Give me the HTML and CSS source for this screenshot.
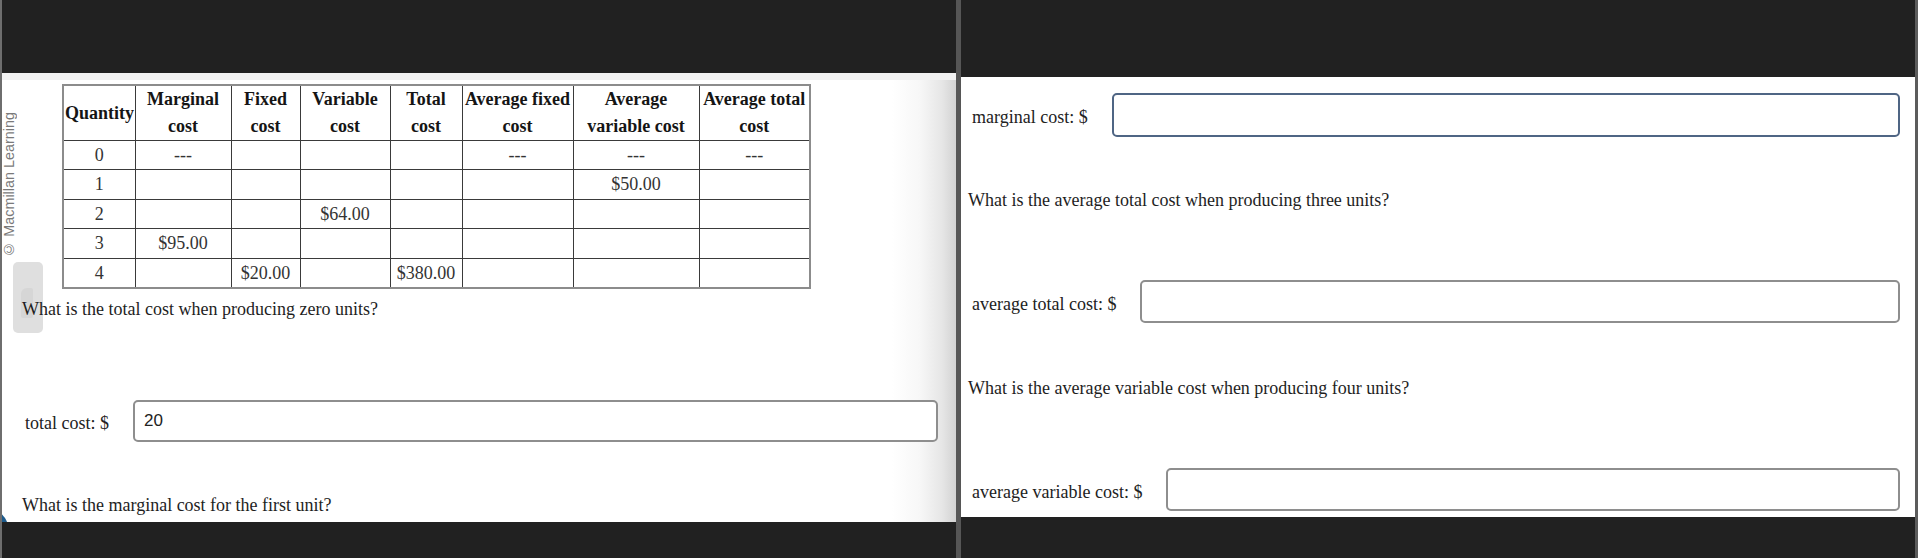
FILE: index.html
```html
<!DOCTYPE html>
<html lang="en">
<head>
<meta charset="utf-8">
<title>Cost table questions</title>
<link rel="stylesheet" href="styles.css">
</head>
<body>
<div class="screen">
  <section class="pane pane-left">
    <div class="bar bar-top-left"></div>
    <div class="sheet sheet-left">
      <div class="gutter"><span class="credit">© Macmillan Learning</span></div>
      <div class="main main-left">
        <table class="cost-table">
          <colgroup>
            <col class="c-qty"><col class="c-mc"><col class="c-fc"><col class="c-vc"><col class="c-tc"><col class="c-afc"><col class="c-avc"><col class="c-atc">
          </colgroup>
          <thead>
            <tr>
              <th>Quantity</th>
              <th>Marginal<br>cost</th>
              <th>Fixed<br>cost</th>
              <th>Variable<br>cost</th>
              <th>Total<br>cost</th>
              <th>Average fixed<br>cost</th>
              <th>Average<br>variable cost</th>
              <th>Average total<br>cost</th>
            </tr>
          </thead>
          <tbody>
            <tr><td>0</td><td>---</td><td></td><td></td><td></td><td>---</td><td>---</td><td>---</td></tr>
            <tr><td>1</td><td></td><td></td><td></td><td></td><td></td><td>$50.00</td><td></td></tr>
            <tr><td>2</td><td></td><td></td><td>$64.00</td><td></td><td></td><td></td><td></td></tr>
            <tr><td>3</td><td>$95.00</td><td></td><td></td><td></td><td></td><td></td><td></td></tr>
            <tr><td>4</td><td></td><td>$20.00</td><td></td><td>$380.00</td><td></td><td></td><td></td></tr>
          </tbody>
        </table>
        <p class="q q-after-table">What is the total cost when producing zero units?</p>
        <div class="answer answer-left">
          <label class="lbl" for="tc0">total cost: $</label>
          <input class="field" id="tc0" type="text" value="20">
        </div>
        <p class="q q-gap">What is the marginal cost for the first unit?</p>
      </div>
      <div class="tab-handle"><span class="tab-mark"></span></div>
      <div class="chat-dot"></div>
    </div>
    <div class="bar bar-fill"></div>
  </section>
  <div class="divider"></div>
  <section class="pane pane-right">
    <div class="bar bar-top-right"></div>
    <div class="sheet sheet-right">
      <div class="answer answer-first">
        <label class="lbl" for="mc1">marginal cost: $</label>
        <input class="field field-focus" id="mc1" type="text" value="">
      </div>
      <p class="q q-gap">What is the average total cost when producing three units?</p>
      <div class="answer answer-next">
        <label class="lbl" for="atc3">average total cost: $</label>
        <input class="field" id="atc3" type="text" value="">
      </div>
      <p class="q q-gap2">What is the average variable cost when producing four units?</p>
      <div class="answer answer-last">
        <label class="lbl" for="avc4">average variable cost: $</label>
        <input class="field" id="avc4" type="text" value="">
      </div>
    </div>
    <div class="bar bar-fill"></div>
  </section>
</div>
</body>
</html>
```

FILE: styles.css
```css
html, body {
  margin: 0;
  padding: 0;
  background: #212121;
}

.screen {
  display: flex;
  width: 1918px;
  height: 558px;
  overflow: hidden;
  background: #212121;
  font-family: "Liberation Serif", "Times New Roman", serif;
  color: #222;
}

.pane {
  display: flex;
  flex-direction: column;
  box-sizing: border-box;
  height: 558px;
}

.pane-left {
  width: 956px;
  border-left: 2px solid #6e6e6e;
}

.pane-right {
  width: 957px;
  border-right: 3px solid #5c5c5c;
}

.divider {
  width: 5px;
  height: 558px;
  background: #565656;
}

.bar {
  background: #212121;
}

.bar-top-left { height: 73px; }
.bar-top-right { height: 77px; }
.bar-fill { flex: 1; }

.sheet {
  position: relative;
  z-index: 0;
  overflow: hidden;
  box-sizing: border-box;
}

.sheet-left {
  display: flex;
  height: 449px;
  border-top: 7px solid #f2f2f2;
  background: linear-gradient(to right, #ffffff 0, #ffffff calc(100% - 64px), #f7f7f7 calc(100% - 36px), #e6e6e6 calc(100% - 14px), #d2d2d2 100%);
}

.sheet-right {
  height: 440px;
  background: #ffffff;
  padding: 0 15px 0 7px;
}

.gutter {
  width: 20px;
  flex: none;
  padding-top: 32px;
}

.credit {
  display: inline-block;
  writing-mode: vertical-rl;
  transform: rotate(180deg);
  font-family: "Liberation Sans", Arial, sans-serif;
  font-size: 14.4px;
  line-height: 14px;
  color: #7a7a7a;
  white-space: nowrap;
}

.main-left {
  flex: 1;
  padding-right: 18px;
}

.cost-table {
  margin: 4px 0 0 40px;
  border-collapse: collapse;
  table-layout: fixed;
  width: 747px;
  border: 2px solid #8c8c8c;
  font-family: "Liberation Serif", "Times New Roman", serif;
  font-size: 18px;
}

.c-qty { width: 72px; }
.c-mc { width: 96px; }
.c-fc { width: 69px; }
.c-vc { width: 90px; }
.c-tc { width: 72px; }
.c-afc { width: 111px; }
.c-avc { width: 126px; }
.c-atc { width: 111px; }

.cost-table th,
.cost-table td {
  border: 1px solid #3a3a3a;
  padding: 0 1px;
  text-align: center;
  vertical-align: middle;
  white-space: nowrap;
  font-family: "Liberation Serif", "Times New Roman", serif;
}

.cost-table th {
  font-weight: bold;
  line-height: 27px;
  color: #151515;
}

.cost-table td {
  line-height: 28.4px;
  color: #333;
}

.q {
  margin: 0;
  font-size: 18px;
  line-height: 27px;
  color: #1e1e1e;
}

.q-after-table { margin-top: 7px; }
.main-left .q-gap { margin-top: 50px; }
.sheet-right .q-gap { margin-top: 50px; }
.q-gap2 { margin-top: 52px; }

.answer {
  display: flex;
  align-items: center;
}

.answer-left { margin-top: 77px; }
.answer-first { padding-top: 16px; }
.answer-next { margin-top: 66px; }
.answer-last { margin-top: 66px; }

.lbl {
  flex: none;
  padding: 5px 24px 0 3px;
  font-family: "Liberation Serif", "Times New Roman", serif;
  font-size: 18px;
  line-height: 27px;
  color: #222;
}

.sheet-right .lbl { padding-left: 4px; }

.field {
  flex: 1;
  min-width: 0;
  box-sizing: border-box;
  height: 43px;
  margin: 0;
  padding: 0 9px;
  border: 2px solid #8e8e8e;
  border-radius: 5px;
  background: #fff;
  font-family: "Liberation Sans", Arial, sans-serif;
  font-size: 17px;
  color: #222;
  outline: none;
}

.answer-left .field { height: 42px; }

.field-focus {
  height: 44px;
  border-color: #4f6584;
}

.tab-handle {
  position: absolute;
  left: 11px;
  top: 182px;
  z-index: -1;
  width: 30px;
  height: 71px;
  border-radius: 5px;
  background: #dfdfdf;
}

.tab-mark {
  display: block;
  margin: 26px 0 0 8px;
  width: 12px;
  height: 30px;
  border-radius: 6px 2px 2px 2px;
  background: #d6d6d6;
}

.chat-dot {
  position: absolute;
  left: -30px;
  top: 430px;
  width: 36px;
  height: 36px;
  border-radius: 50%;
  background: #1d5b8c;
}
```
